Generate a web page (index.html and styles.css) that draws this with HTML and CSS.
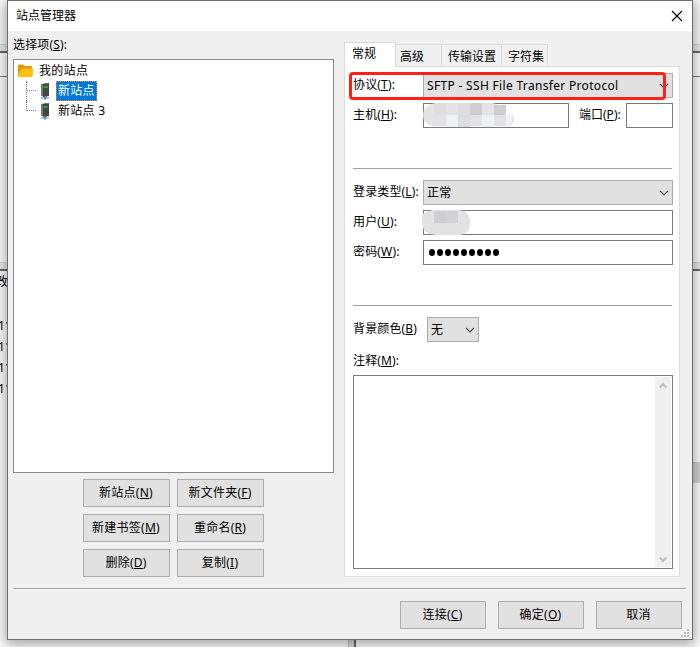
FILE: index.html
```html
<!DOCTYPE html>
<html lang="zh-CN">
<head>
<meta charset="utf-8">
<title>站点管理器</title>
<link rel="stylesheet" href="styles.css">
</head>
<body>
<div class="desktop">
  <div class="bg-top"></div>
  <div class="bg-splitter"></div>
  <div class="bg-path"></div>
  <div class="bg-files"></div>
  <div class="bg-splitter"></div>
  <div class="bg-log">
    <div class="log-text"><span class="log-head">改</span><span>11</span><span>11</span><span>11</span><span>11</span></div>
    <div class="log-thumb"></div>
    <div class="log-divider"></div>
  </div>
</div>

<div class="dialog">
  <header class="titlebar">
    <h1>站点管理器</h1>
    <svg class="close" width="12" height="12" viewBox="0 0 12 12"><path d="M1 1L11 11M11 1L1 11"/></svg>
  </header>

  <main class="content">
    <section class="sites">
      <div class="sites-label">选择项(<u>S</u>):</div>
      <div class="tree">
        <div class="node root">
          <svg width="17" height="14" viewBox="0 0 17 14"><path fill="#dd9a09" d="M1 2Q1 .5 2.500 .5H6L7.500 2H14Q15 2 15 3V12H1Z"/><path fill="#ffbf16" d="M5 4.500H16.500L15.500 13H1.500Q1 13 1 12L2.500 7Q4.500 7 5 4.500Z"/></svg>
          <span>我的站点</span>
        </div>
        <div class="node child">
          <i class="branch"></i>
          <svg width="10" height="17" viewBox="0 0 10 17"><path fill="#777" d="M1 1L7 0V14L1 13Z"/><path fill="#454545" d="M3 1L9 0V13L3 14Z"/><path fill="#32b437" d="M3.500 3.500L8 3V4.500L3.500 5Z"/><path fill="#4f8cba" d="M1 14.500H9V15.500H1ZM4 13.500H6V16.500H4Z"/></svg>
          <span class="selected">新站点</span>
        </div>
        <div class="node child">
          <i class="branch"></i>
          <svg width="10" height="17" viewBox="0 0 10 17"><path fill="#777" d="M1 1L7 0V14L1 13Z"/><path fill="#454545" d="M3 1L9 0V13L3 14Z"/><path fill="#32b437" d="M3.500 3.500L8 3V4.500L3.500 5Z"/><path fill="#4f8cba" d="M1 14.500H9V15.500H1ZM4 13.500H6V16.500H4Z"/></svg>
          <span class="plain">新站点 3</span>
        </div>
      </div>
      <div class="site-buttons">
        <div class="button">新站点(<u>N</u>)</div>
        <div class="button">新文件夹(<u>F</u>)</div>
        <div class="button">新建书签(<u>M</u>)</div>
        <div class="button">重命名(<u>R</u>)</div>
        <div class="button">删除(<u>D</u>)</div>
        <div class="button">复制(<u>I</u>)</div>
      </div>
    </section>

    <section class="notebook">
      <nav class="tabs">
        <div class="tab active">常规</div>
        <div class="tab advanced">高级</div>
        <div class="tab transfer">传输设置</div>
        <div class="tab charset">字符集</div>
      </nav>
      <div class="pane">
        <div class="row protocol">
          <label>协议(<u>T</u>):</label>
          <div class="select"><span class="latin">SFTP - SSH File Transfer Protocol</span><svg class="chevron" width="10" height="6" viewBox="0 0 10 6"><path d="M1 .8L5 4.800L9 .8"/></svg></div>
          <div class="highlight"></div>
        </div>
        <div class="row host">
          <label>主机(<u>H</u>):</label>
          <div class="input host-input"><svg class="mask" width="92" height="25" viewBox="0 0 92 25"><path fill="#e3e3e5" d="M12 0H70L83 5V12H91V18L88 23H10Q0 21 0 12Q0 3 12 0Z"/><path fill="#dddddf" d="M11 0H23V12H11ZM35 0H47V12H35ZM35 12H47V24H35Z"/><path fill="#cecdd1" d="M47 0H59V12H47ZM71 2H83V12H71Z"/><path fill="#f0f1f3" d="M23 12H35V24H23ZM59 12H71V24H59ZM83 12H91L87 24H83Z"/></svg></div>
          <label class="port">端口(<u>P</u>):</label>
          <div class="input port-input"></div>
        </div>
        <hr>
        <div class="row login">
          <label>登录类型(<u>L</u>):</label>
          <div class="select"><span>正常</span><svg class="chevron" width="10" height="6" viewBox="0 0 10 6"><path d="M1 .8L5 4.800L9 .8"/></svg></div>
        </div>
        <div class="row">
          <label>用户(<u>U</u>):</label>
          <div class="input"><svg class="mask user-mask" width="50" height="25" viewBox="0 0 50 25"><path fill="#e2e2e3" d="M10 0H37Q48 1 48 12Q49 23 38 25H14Q1 24 0 14V4Z"/><path fill="#cfcfd1" d="M12 1H24V13H12Z"/><path fill="#d2d2d4" d="M24 1H36V13H24Z"/></svg></div>
        </div>
        <div class="row">
          <label>密码(<u>W</u>):</label>
          <div class="input password"><i></i><i></i><i></i><i></i><i></i><i></i><i></i><i></i><i></i></div>
        </div>
        <hr class="second">
        <div class="row color">
          <label>背景颜色(<u>B</u>)</label>
          <div class="select small"><span>无</span><svg class="chevron" width="10" height="6" viewBox="0 0 10 6"><path d="M1 .8L5 4.800L9 .8"/></svg></div>
        </div>
        <div class="notes-label">注释(<u>M</u>):</div>
        <div class="notes">
          <div class="scrollbar">
            <svg width="8" height="7" viewBox="0 0 8 7"><path d="M.8 5.500L4 2L7.200 5.500"/></svg>
            <svg width="8" height="7" viewBox="0 0 8 7"><path d="M.8 1.500L4 5L7.200 1.500"/></svg>
          </div>
        </div>
      </div>
    </section>
  </main>

  <footer class="actions">
    <div class="button">连接(<u>C</u>)</div>
    <div class="button">确定(<u>O</u>)</div>
    <div class="button">取消</div>
  </footer>
  <svg class="grip" width="8" height="8" viewBox="0 0 8 8"><path fill="#bfbfbf" d="M6 0H8V2H6ZM3 3H5V5H3ZM6 3H8V5H6ZM0 6H2V8H0ZM3 6H5V8H3ZM6 6H8V8H6Z"/></svg>
</div>
</body>
</html>
```

FILE: styles.css
```css
* { box-sizing: border-box; }
body {
  margin: 0;
  width: 700px;
  height: 647px;
  position: relative;
  overflow: hidden;
  font: 12px/16px "Noto Sans", "Noto Sans CJK SC", sans-serif;
  color: #000;
}
u { text-underline-offset: 1px; text-decoration-skip-ink: none; }
svg { display: block; flex: none; }

/* application window behind the dialog */
.desktop {
  height: 647px;
  display: flex;
  flex-direction: column;
  background: #fff;
}
.bg-top { height: 44px; background: #fbfbfb; }
.bg-splitter {
  height: 9px;
  flex: none;
  background: #ececec;
  border-top: 1px solid #d5d5d5;
  border-bottom: 2px solid #696969;
}
.bg-path { height: 24px; border-bottom: 1px solid #777; }
.bg-files { height: 185px; }
.bg-log { flex: 1; display: grid; grid-template-columns: 348px 8px 1fr; grid-template-rows: 191px 21px 1fr; }
.log-text { grid-column: 1; grid-row: 1 / 4; }
.log-text span { display: block; width: 14px; height: 21px; line-height: 21px; margin-left: -2px; }
.log-text .log-head { margin: 0 0 23px -4px; }
.log-thumb { grid-column: 3; grid-row: 2; background: #d3d3d3; }
.log-divider {
  grid-column: 2;
  grid-row: 3;
  background: #dedede;
  border-left: 1px solid #c5c5c5;
  border-right: 2px solid #696969;
}

.dialog {
  position: absolute;
  left: 7px;
  top: 0;
  width: 686px;
  height: 640px;
  display: flex;
  flex-direction: column;
  background: #f0f0f0;
  border: 1px solid #6e6e6e;
  box-shadow: 0 3px 13px 2px rgba(0, 0, 0, .36);
}
.titlebar {
  height: 30px;
  display: flex;
  align-items: center;
  justify-content: space-between;
  padding: 0 9px 0 8px;
  background: #fff;
}
.titlebar h1 { margin: 0; font-size: 12px; font-weight: 400; }
.close path { fill: none; stroke: #000; stroke-width: 1.1; }

.content {
  height: 557px;
  display: flex;
  padding: 0 12px 0 5px;
  letter-spacing: .15px;
}
.sites { width: 321px; padding-top: 6px; }
.sites-label { height: 22px; }
.tree {
  height: 414px;
  padding: 1px 4px;
  background: #fff;
  border: 1px solid #828790;
  letter-spacing: .3px;
}
.node { height: 20px; display: flex; align-items: center; }
.root { gap: 5px; margin-left: -1px; }
.child { padding-left: 8px; }
.branch {
  width: 11px;
  height: 20px;
  margin-right: 3px;
  border-left: 1px dotted #777;
  background: repeating-linear-gradient(90deg, #888 0 1px, transparent 1px 2px) 0 9px / 100% 1px no-repeat;
}
.child:last-child .branch { height: 10px; align-self: flex-start; }
.child svg { margin-right: 6px; }
.selected {
  height: 20px;
  line-height: 18px;
  padding: 0 1px;
  color: #fff;
  background: #0078d7;
  border: 1px dotted #f08a28;
}
.plain { padding-left: 2px; }
.site-buttons {
  display: grid;
  grid-template-columns: 87px 87px;
  grid-auto-rows: 28px;
  gap: 7px;
  padding: 6px 0 0 70px;
}
.button {
  height: 28px;
  padding-right: 1px;
  line-height: 26px;
  letter-spacing: .25px;
  text-align: center;
  background: #e1e1e1;
  border: 1px solid #adadad;
}

.notebook { width: 336px; margin-left: 10px; padding-top: 11px; }
.tabs { height: 24px; display: flex; align-items: flex-end; letter-spacing: 0; }
.tab {
  height: 22px;
  padding-left: 5px;
  line-height: 23px;
  border: solid #d9d9d9;
  border-width: 1px 1px 0 0;
}
.tab.active {
  position: relative;
  width: 52px;
  height: 25px;
  margin-bottom: -1px;
  padding-left: 7px;
  line-height: 22px;
  background: #fff;
  border-left-width: 1px;
}
.advanced { width: 46px; padding-left: 4px; }
.transfer { width: 60px; padding-left: 6px; }
.charset { width: 46px; padding-left: 6px; }
.pane {
  height: 511px;
  padding: 6px 6px 0 8px;
  background: #fff;
  border: 1px solid #dcdcdc;
}
.row { height: 25px; margin-bottom: 5px; display: flex; position: relative; }
.row label { width: 70px; line-height: 24px; flex: none; white-space: nowrap; }
.select, .input { flex: 1; height: 25px; border: 1px solid #7a7a7a; }
.select {
  display: flex;
  align-items: center;
  justify-content: space-between;
  padding: 0 3px;
  background: #e1e1e1;
  border-color: #adadad;
}
.latin { white-space: nowrap; letter-spacing: .32px; }
.chevron path { fill: none; stroke: #444; stroke-width: 1.2; }
.highlight {
  position: absolute;
  left: -4px;
  top: -1px;
  width: 317px;
  height: 28px;
  border: 3px solid #fb2116;
  border-radius: 4px;
}
.host { margin-bottom: 40px; }
.row .host-input { flex: none; width: 146px; }
.row .port { width: 47px; margin-left: 10px; letter-spacing: 0; }
.row .port-input { flex: none; width: 47px; }
.mask { margin: -1px 0 0 -1px; }
.user-mask { margin-left: -2px; }
hr { height: 1px; margin: 0 1px 11px 0; border: 0; background: #a0a0a0; }
.second { margin: 40px 1px 11px 0; }
.password { display: flex; align-items: center; gap: 2px; padding-left: 5px; }
.password i { width: 6px; height: 7px; border-radius: 50%; background: #000; }
.row.color label { width: 74px; }
.select.small { flex: none; width: 52px; }
.notes-label { height: 28px; padding-top: 6px; }
.notes {
  height: 194px;
  padding: 1px;
  display: flex;
  justify-content: flex-end;
  border: 1px solid #7a7a7a;
}
.scrollbar {
  width: 16px;
  padding: 5px 0 4px;
  display: flex;
  flex-direction: column;
  align-items: center;
  justify-content: space-between;
  background: #f0f0f0;
}
.scrollbar path { fill: none; stroke: #bdbdbd; stroke-width: 2; }

.actions {
  margin: 0 6px 0 5px;
  padding: 12px 4px 0 0;
  display: flex;
  justify-content: flex-end;
  gap: 12px;
  border-top: 1px solid #a0a0a0;
  box-shadow: inset 0 1px #fff;
}
.actions .button { width: 86px; }
.grip { position: absolute; right: 3px; bottom: 2px; }
```
